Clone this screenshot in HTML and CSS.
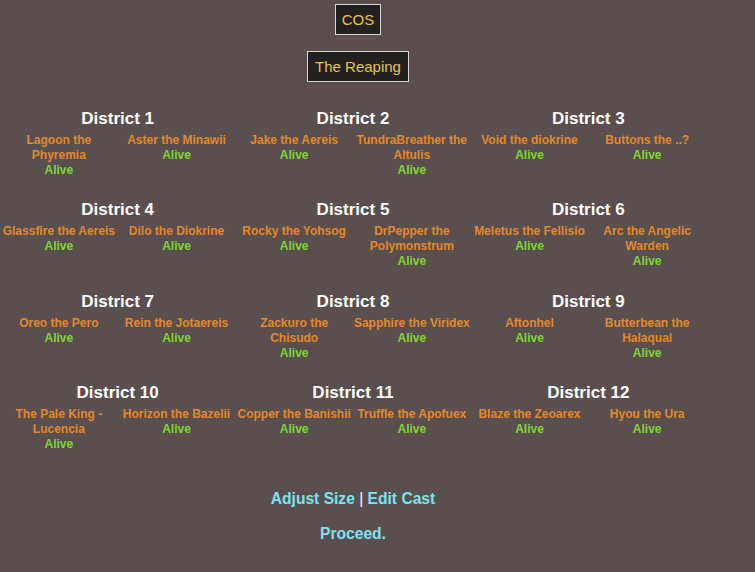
FILE: index.html
```html
<!DOCTYPE html>
<html lang="en">
<head>
  <meta charset="UTF-8" />
  <title>The Reaping</title>
  <link rel="stylesheet" href="styles.css">
</head>
<body>
  <div class="page">
    <div class="top-btns">
      <a class="btn btn-cos" href="#">COS</a>
      <a class="btn btn-reap" href="#">The Reaping</a>
    </div>

    <div class="districts">
      <div class="district">
        <h2>District 1</h2>
        <div class="tributes">
          <div class="tribute"><span class="name">Lagoon the Phyremia</span><span class="status">Alive</span></div>
          <div class="tribute"><span class="name">Aster the Minawii</span><span class="status">Alive</span></div>
        </div>
      </div>
      <div class="district">
        <h2>District 2</h2>
        <div class="tributes">
          <div class="tribute"><span class="name">Jake the Aereis</span><span class="status">Alive</span></div>
          <div class="tribute"><span class="name">TundraBreather the Altulis</span><span class="status">Alive</span></div>
        </div>
      </div>
      <div class="district">
        <h2>District 3</h2>
        <div class="tributes">
          <div class="tribute"><span class="name">Void the diokrine</span><span class="status">Alive</span></div>
          <div class="tribute"><span class="name">Buttons the ..?</span><span class="status">Alive</span></div>
        </div>
      </div>

      <div class="district">
        <h2>District 4</h2>
        <div class="tributes">
          <div class="tribute"><span class="name">Glassfire the Aereis</span><span class="status">Alive</span></div>
          <div class="tribute"><span class="name">Dilo the Diokrine</span><span class="status">Alive</span></div>
        </div>
      </div>
      <div class="district">
        <h2>District 5</h2>
        <div class="tributes">
          <div class="tribute"><span class="name">Rocky the Yohsog</span><span class="status">Alive</span></div>
          <div class="tribute"><span class="name">DrPepper the Polymonstrum</span><span class="status">Alive</span></div>
        </div>
      </div>
      <div class="district">
        <h2>District 6</h2>
        <div class="tributes">
          <div class="tribute"><span class="name">Meletus the Fellisio</span><span class="status">Alive</span></div>
          <div class="tribute"><span class="name">Arc the Angelic Warden</span><span class="status">Alive</span></div>
        </div>
      </div>

      <div class="district">
        <h2>District 7</h2>
        <div class="tributes">
          <div class="tribute"><span class="name">Oreo the Pero</span><span class="status">Alive</span></div>
          <div class="tribute"><span class="name">Rein the Jotaereis</span><span class="status">Alive</span></div>
        </div>
      </div>
      <div class="district">
        <h2>District 8</h2>
        <div class="tributes">
          <div class="tribute"><span class="name">Zackuro the Chisudo</span><span class="status">Alive</span></div>
          <div class="tribute"><span class="name">Sapphire the Viridex</span><span class="status">Alive</span></div>
        </div>
      </div>
      <div class="district">
        <h2>District 9</h2>
        <div class="tributes">
          <div class="tribute"><span class="name">Aftonhel</span><span class="status">Alive</span></div>
          <div class="tribute"><span class="name">Butterbean the Halaqual</span><span class="status">Alive</span></div>
        </div>
      </div>

      <div class="district">
        <h2>District 10</h2>
        <div class="tributes">
          <div class="tribute"><span class="name">The Pale King - Lucencia</span><span class="status">Alive</span></div>
          <div class="tribute"><span class="name">Horizon the Bazelii</span><span class="status">Alive</span></div>
        </div>
      </div>
      <div class="district">
        <h2>District 11</h2>
        <div class="tributes">
          <div class="tribute"><span class="name">Copper the Banishii</span><span class="status">Alive</span></div>
          <div class="tribute"><span class="name">Truffle the Apofuex</span><span class="status">Alive</span></div>
        </div>
      </div>
      <div class="district">
        <h2>District 12</h2>
        <div class="tributes">
          <div class="tribute"><span class="name">Blaze the Zeoarex</span><span class="status">Alive</span></div>
          <div class="tribute"><span class="name">Hyou the Ura</span><span class="status">Alive</span></div>
        </div>
      </div>
    </div>

    <p class="links"><a href="#">Adjust Size</a> <span class="sep">|</span> <a href="#">Edit Cast</a></p>
    <p class="proceed"><a href="#">Proceed.</a></p>
  </div>
</body>
</html>
```

FILE: styles.css
```css
* { margin: 0; padding: 0; box-sizing: border-box; }
body {
  font-family: "Liberation Sans", Arial, sans-serif;
  background: #594f4f;
  color: #fff;
}
.page { width: 706px; }

/* Tombol atas */
.top-btns {
  display: flex; flex-direction: column; align-items: center;
  padding-top: 4px; padding-left: 10px;
}
.btn {
  display: block; height: 31px; line-height: 29px;
  background: #222120; border: 1px solid #d6d6d6;
  color: #e8c63c; font-size: 15px; text-decoration: none;
  padding: 0 6px;
}
.btn-reap { margin-top: 16px; padding: 0 7px; }

/* Distrik */
.districts {
  display: grid; grid-template-columns: repeat(3, 1fr);
  row-gap: 22.3px; margin-top: 27px;
}
.district h2 {
  font-size: 17px; line-height: 20px; text-align: center;
  margin-bottom: 4px;
}
.tributes { display: grid; grid-template-columns: 1fr 1fr; height: 45px; }
.tribute {
  display: flex; flex-direction: column; align-items: center;
  text-align: center; font-size: 12px; font-weight: bold; line-height: 15px;
}
.tribute .name { color: #e3882a; }
.tribute .status { color: #7fd630; }

/* Link bawah */
.links, .proceed {
  text-align: center; font-size: 15.6px; font-weight: bold;
}
.links { margin-top: 38px; }
.proceed { margin-top: 17px; }
.links a, .proceed a { color: #7fe2ea; text-decoration: none; }
.sep { color: #fff; font-weight: normal; }
```
